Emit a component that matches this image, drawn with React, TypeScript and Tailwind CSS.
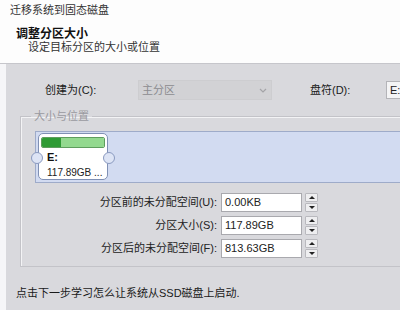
import React from 'react';

const font = { fontFamily: '"Liberation Sans", "Noto Sans CJK SC", sans-serif' };

function Spinner() {
  return (
    <div className="flex flex-col w-[13px] h-[19px] gap-[1px]">
      <div className="flex-1 flex items-center justify-center bg-[#eeeef0] border border-[#b9b9be] rounded-[1px]">
        <div className="w-0 h-0 border-l-[3px] border-r-[3px] border-b-[3px] border-l-transparent border-r-transparent border-b-[#222]" />
      </div>
      <div className="flex-1 flex items-center justify-center bg-[#eeeef0] border border-[#b9b9be] rounded-[1px]">
        <div className="w-0 h-0 border-l-[3px] border-r-[3px] border-t-[3px] border-l-transparent border-r-transparent border-t-[#222]" />
      </div>
    </div>
  );
}

function SizeRow({ label, value }: { label: string; value: string }) {
  return (
    <div className="flex items-center h-[19px]">
      <div className="w-[197px] text-right pr-[1px] text-[#222]">{label}</div>
      <div className="ml-[3px] w-[81px] h-[19px] bg-white border border-[#a9a9ae] flex items-center pl-[3px] text-[#222]">
        {value}
      </div>
      <div className="ml-[3px]">
        <Spinner />
      </div>
    </div>
  );
}

export default function App() {
  return (
    <div className="w-[400px] h-[310px] overflow-hidden bg-white flex flex-col text-[11px] leading-[13px]" style={font}>
      {/* Header */}
      <header className="h-[64px] shrink-0 border-b border-[#c6c6cb] bg-[#fdfdfd] pt-[4px]">
        <div className="pl-[10px] text-[#333]">迁移系统到固态磁盘</div>
        <div className="pl-[16px] mt-[11px] text-[12px] font-bold text-[#111]">调整分区大小</div>
        <div className="pl-[28px] text-[#333]">设定目标分区的大小或位置</div>
      </header>

      <div className="flex flex-1 min-h-0">
        <div className="w-[6px] bg-[#f6f6f8] shrink-0" />
        <main className="flex-1 bg-[#d9d9dd] pt-[16px] whitespace-nowrap">
          {/* Create as / drive letter */}
          <div className="flex items-center h-[20px]">
            <div className="w-[132px] pl-[39px] text-[#1a1a1a]">创建为(C):</div>
            <div className="w-[134px] h-[20px] bg-[#d2d2d5] border border-[#cdcdd0] flex items-center justify-between pl-[3px] pr-[4px]">
              <span className="text-[#8c8c90]">主分区</span>
              <svg width="8" height="5" viewBox="0 0 8 5">
                <path d="M1 1 L4 4 L7 1" fill="none" stroke="#a4a4a8" strokeWidth="1.2" />
              </svg>
            </div>
            <div className="ml-[38px] w-[76px] text-[#1a1a1a]">盘符(D):</div>
            <div className="w-[30px] h-[18px] bg-[#f4f4f5] border border-[#b4b4b8] flex items-center pl-[3px] text-[#222]">E:</div>
          </div>

          {/* Size and position group */}
          <fieldset className="ml-[14px] mt-[10px] w-[400px] border border-[#c3c3c8] shadow-[inset_1px_1px_0_#f3f3f5] pb-[8px]">
            <legend className="ml-[10px] px-[3px] text-[#9a9aa0]">大小与位置</legend>
            <div className="ml-[14px] mt-[8px] h-[52px] bg-[#d2dbf1] border-y border-l border-[#9eabc9] pl-[2px] pt-[1px]">
              <div className="relative w-[70px] h-[47px] bg-white border border-[#8090b4] rounded-[5px]">
                <div className="mx-[2px] mt-[3px] h-[11px] flex border border-[#5e9d5e] rounded-[2px] overflow-hidden">
                  <div className="w-[19px] bg-[#2f9b35]" />
                  <div className="flex-1 bg-[#93d98f]" />
                </div>
                <div className="pl-[8px] mt-[3px] font-bold text-[#111]">E:</div>
                <div className="pl-[8px] mt-[2px] text-[10px] text-[#222]">117.89GB ...</div>
                <div className="absolute left-[-8px] top-[18px] w-[12px] h-[12px] rounded-full bg-[#dde4f5] border border-[#8a9ac0]" />
                <div className="absolute right-[-8px] top-[18px] w-[12px] h-[12px] rounded-full bg-[#dde4f5] border border-[#8a9ac0]" />
              </div>
            </div>
            <div className="mt-[10px] flex flex-col gap-[4px]">
              <SizeRow label="分区前的未分配空间(U):" value="0.00KB" />
              <SizeRow label="分区大小(S):" value="117.89GB" />
              <SizeRow label="分区后的未分配空间(F):" value="813.63GB" />
            </div>
          </fieldset>

          <div className="pl-[10px] mt-[20px] text-[#1a1a1a]">点击下一步学习怎么让系统从SSD磁盘上启动.</div>
        </main>
      </div>
    </div>
  );
}
